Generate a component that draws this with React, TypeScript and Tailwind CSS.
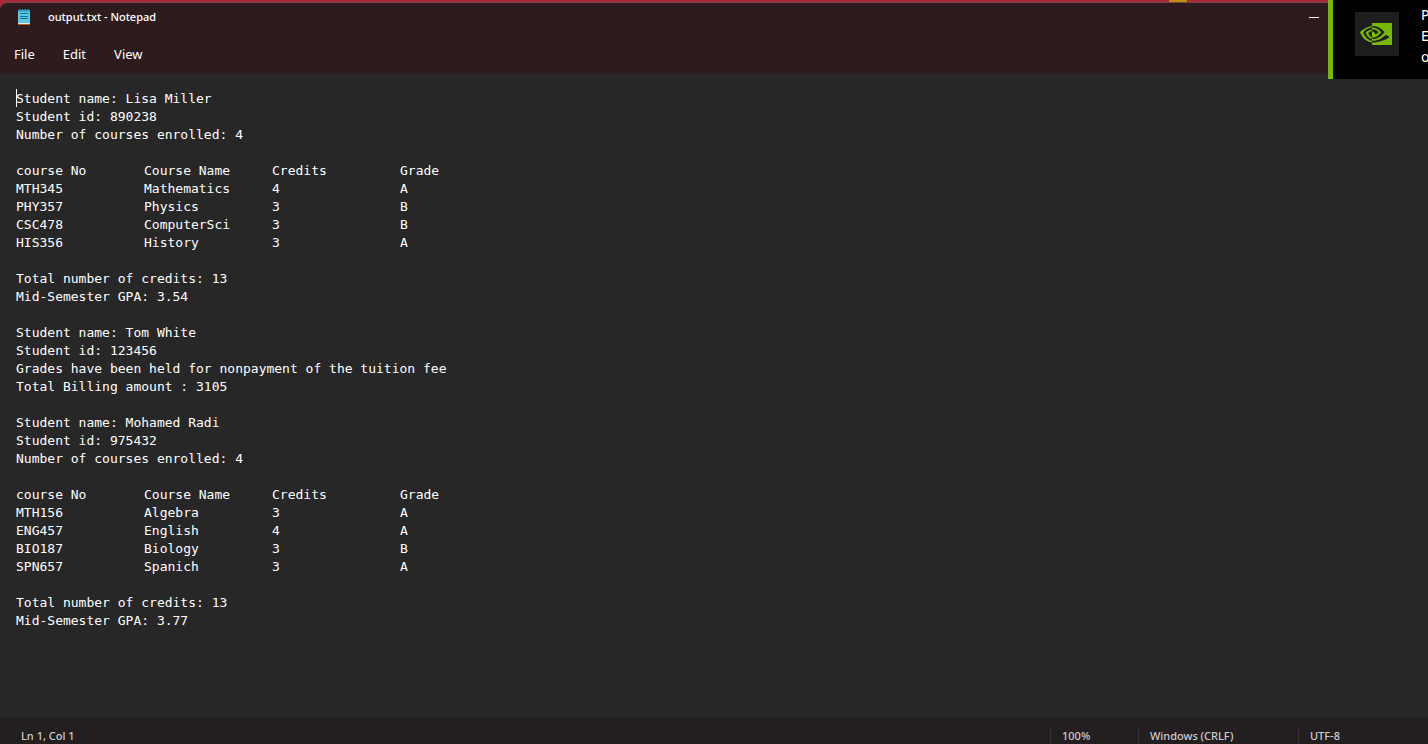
const content = [
  "Student name: Lisa Miller",
  "Student id: 890238",
  "Number of courses enrolled: 4",
  "",
  "course No\tCourse Name\tCredits\tGrade",
  "MTH345\tMathematics\t4\tA",
  "PHY357\tPhysics\t3\tB",
  "CSC478\tComputerSci\t3\tB",
  "HIS356\tHistory\t3\tA",
  "",
  "Total number of credits: 13",
  "Mid-Semester GPA: 3.54",
  "",
  "Student name: Tom White",
  "Student id: 123456",
  "Grades have been held for nonpayment of the tuition fee",
  "Total Billing amount : 3105",
  "",
  "Student name: Mohamed Radi",
  "Student id: 975432",
  "Number of courses enrolled: 4",
  "",
  "course No\tCourse Name\tCredits\tGrade",
  "MTH156\tAlgebra\t3\tA",
  "ENG457\tEnglish\t4\tA",
  "BIO187\tBiology\t3\tB",
  "SPN657\tSpanich\t3\tA",
  "",
  "Total number of credits: 13",
  "Mid-Semester GPA: 3.77",
].join("\n");

function NotepadIcon() {
  return (
    <svg className="h-4 w-3" viewBox="0 0 12 16" shapeRendering="crispEdges" aria-hidden="true">
      <rect y="1" width="12" height="13" fill="#5cc8e4" />
      <rect y="1" width="12" height="2" fill="#43b3d3" />
      <path d="M1 0h2v2H1zM4 0h1v2H4zM6 0h2v2H6zM9 0h2v2H9z" fill="#2785a5" />
      <path d="M2 4h8v1H2zM2 7h8v1H2zM2 9h8v1H2z" fill="#10728f" />
      <rect y="14" width="12" height="1" fill="#f2eee8" />
      <rect y="15" width="12" height="1" fill="#b85a0c" />
    </svg>
  );
}

function NvidiaLogo() {
  return (
    <svg className="h-[22px] w-8" viewBox="56.8 31.5 249 164.8" fill="#76b900" preserveAspectRatio="none" aria-hidden="true">
      <path d="M82.211 102.414s22.504-33.203 67.437-36.638V53.73c-49.769 3.997-92.867 46.149-92.867 46.149s24.41 70.564 92.867 77.026v-12.804c-50.237-6.32-67.437-61.687-67.437-61.687zm67.437 36.223v11.727c-37.968-6.77-48.507-46.237-48.507-46.237s18.23-20.195 48.507-23.47v12.867c-.023 0-.039-.007-.058-.007-15.891-1.907-28.305 12.938-28.305 12.938s6.958 24.99 28.363 32.182m0-107.125V53.73c1.461-.112 2.922-.207 4.391-.257 56.582-1.907 93.449 46.406 93.449 46.406s-42.343 51.488-86.457 51.488c-4.043 0-7.828-.375-11.383-1.005v13.739a75.04 75.04 0 0 0 9.481.612c41.051 0 70.738-20.965 99.484-45.778 4.766 3.817 24.278 13.103 28.289 17.167-27.332 22.884-91.031 41.33-127.144 41.33-3.481 0-6.824-.211-10.11-.528v19.306H305.68V31.512H149.648zm0 49.144V65.777c1.446-.101 2.903-.179 4.391-.226 40.688-1.278 67.382 34.965 67.382 34.965s-28.832 40.042-59.746 40.042c-4.449 0-8.438-.715-12.028-1.922V93.523c15.84 1.914 19.028 8.911 28.551 24.786l21.181-17.859s-15.461-20.277-41.524-20.277c-2.834-.001-5.545.198-8.18.483" />
    </svg>
  );
}

function TitleBar() {
  return (
    <header className="h-[70px] shrink-0 bg-[#2e1b1d]">
      <div className="flex h-7 items-center pl-[18px] pr-[109px] text-[11px] font-medium text-white">
        <NotepadIcon />
        <h1 className="ml-[18px] flex-1">output.txt - Notepad</h1>
        <button type="button" aria-label="Minimize" className="flex h-full w-[10px] items-center">
          <span className="h-px w-full bg-white" />
        </button>
      </div>
      <nav className="flex gap-7 px-[14px] pt-[13px] text-[13px] leading-5 text-white">
        <button type="button">File</button>
        <button type="button">Edit</button>
        <button type="button">View</button>
      </nav>
    </header>
  );
}

function Notification() {
  return (
    <aside className="absolute right-0 top-0 flex h-[79px] w-[100px] overflow-hidden border-l-[5px] border-[#76b900] bg-black pl-[22px] pt-3">
      <div className="flex size-11 shrink-0 items-center justify-center bg-[#1e1e1e] pr-[2px]">
        <NvidiaLogo />
      </div>
      <p className="-mt-2 ml-[22px] shrink-0 text-[14px] leading-[21px] text-white">
        P<br />E<br />o
      </p>
    </aside>
  );
}

function StatusBar() {
  return (
    <footer className="flex h-[26px] shrink-0 border-t border-[#1f1c1d] bg-[#231e20] pt-2 text-[11px] font-medium leading-[18px] text-[#cfcdce]">
      <span className="flex-1 pl-[21px]">Ln 1, Col 1</span>
      <span className="w-[88px] border-l border-[#383435] pl-[11px]">100%</span>
      <span className="w-40 border-l border-[#383435] pl-[11px]">Windows (CRLF)</span>
      <span className="w-[130px] border-l border-[#383435] pl-[11px]">UTF-8</span>
    </footer>
  );
}

export default function App() {
  return (
    <div className="relative flex h-screen flex-col overflow-hidden bg-[#a82a3a] font-['Noto_Sans','Open_Sans',sans-serif]">
      <div className="flex h-[2px] shrink-0 justify-end pr-[241px]">
        <span className="w-[18px] bg-[#c0900f]" />
      </div>
      <div className="flex min-h-0 flex-1 flex-col overflow-hidden rounded-tl-lg border-t border-[#74464c] bg-[#272727]">
        <TitleBar />
        <main className="relative flex min-h-0 flex-1">
          <textarea
            aria-label="Text editor"
            spellCheck={false}
            defaultValue={content}
            className="flex-1 resize-none overflow-hidden bg-[#272727] px-4 pt-[17px] font-['DejaVu_Sans_Mono',monospace] text-[13px] leading-[18px] text-white outline-none [tab-size:128px]"
          />
          <span className="absolute left-4 top-4 h-[18px] w-px bg-white" />
        </main>
        <StatusBar />
      </div>
      <Notification />
    </div>
  );
}
